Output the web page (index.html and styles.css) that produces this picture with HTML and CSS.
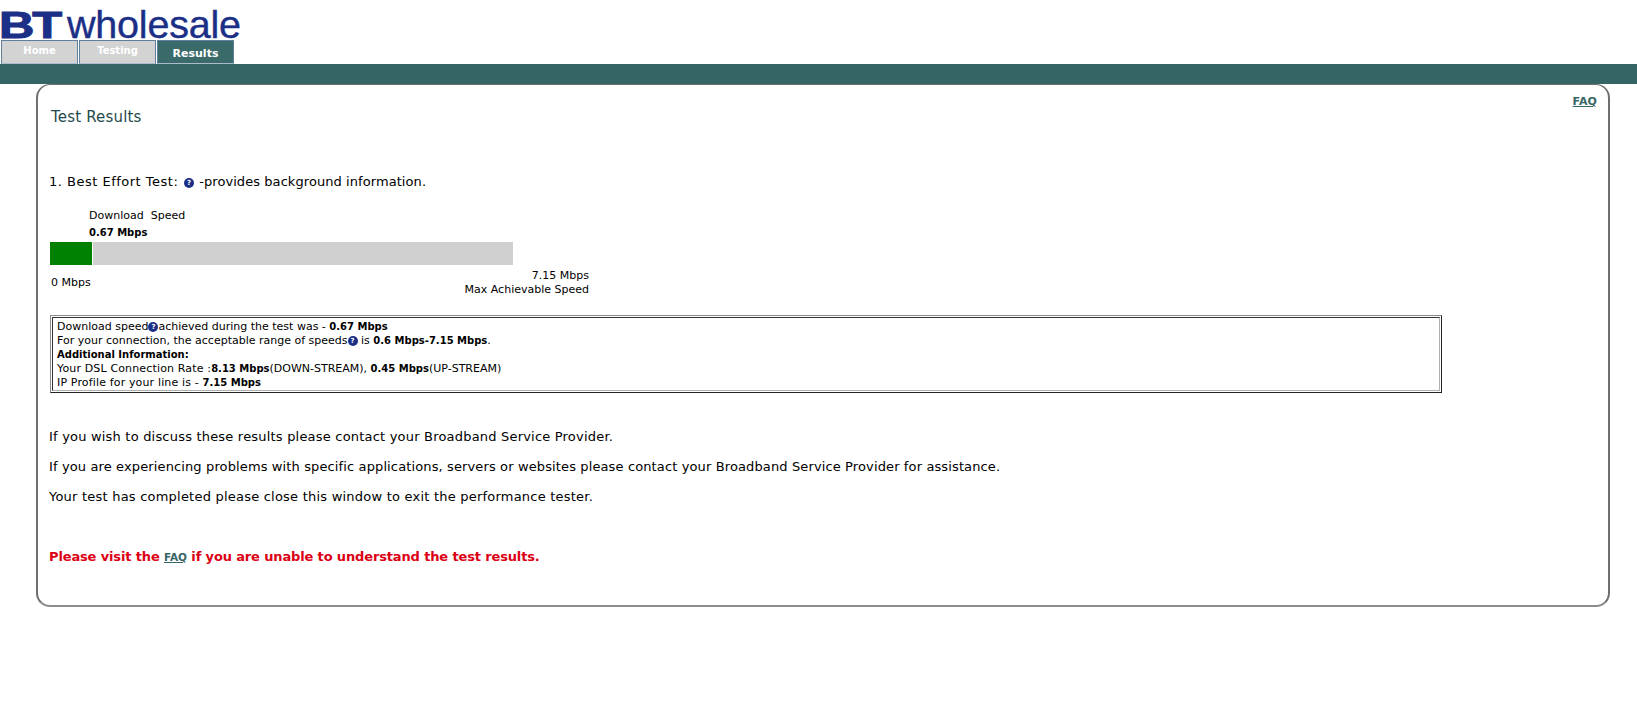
FILE: index.html
```html
<!DOCTYPE html>
<html lang="en">
<head>
<meta charset="utf-8">
<title>BT Wholesale - Test Results</title>
<link rel="stylesheet" href="styles.css">
</head>
<body>
<header class="header">
  <div class="logo"><span class="logo-bt">BT</span><span class="logo-word">wholesale</span></div>
  <nav class="tabs">
    <a class="tab">Home</a>
    <a class="tab">Testing</a>
    <a class="tab tab-active">Results</a>
  </nav>
</header>
<div class="band"></div>
<main class="panel">
  <div class="faq-row"><a class="faq-link">FAQ</a></div>
  <h1 class="title">Test Results</h1>
  <p class="test-line"><span class="test-name">1. Best Effort Test: </span><span class="help help-gap">?</span> -provides background information.</p>
  <div class="speed-label">Download&nbsp; Speed</div>
  <div class="speed-value">0.67 Mbps</div>
  <div class="bar"><div class="bar-fill"></div></div>
  <div class="scale">
    <span class="scale-min">0 Mbps</span>
    <span class="scale-max">7.15 Mbps<br>Max Achievable Speed</span>
  </div>
  <div class="info">
    <div class="info-inner">
      Download speed<span class="help">?</span>achieved during the test was - <b>0.67 Mbps</b><br>
      For your connection, the acceptable range of speeds<span class="help">?</span> is <b>0.6 Mbps-7.15 Mbps</b>.<br>
      <b>Additional Information:</b><br>
      <span class="wide">Your DSL Connection Rate :</span><b>8.13 Mbps</b>(DOWN-STREAM), <b>0.45 Mbps</b>(UP-STREAM)<br>
      <span class="wide">IP Profile for your line is - </span><b>7.15 Mbps</b>
    </div>
  </div>
  <p class="para para-first">If you wish to discuss these results please contact your Broadband Service Provider.</p>
  <p class="para para-long">If you are experiencing problems with specific applications, servers or websites please contact your Broadband Service Provider for assistance.</p>
  <p class="para para-last">Your test has completed please close this window to exit the performance tester.</p>
  <p class="notice">Please visit the <a class="notice-link">FAQ</a> if you are unable to understand the test results.</p>
</main>
</body>
</html>
```
FILE: styles.css
```css
* { box-sizing: border-box; }
html, body { margin: 0; padding: 0; background: #fff; }
body { font-family: "DejaVu Sans", Verdana, sans-serif; color: #000; height: 708px; overflow: hidden; }

.header { height: 64px; display: flex; flex-direction: column; }
.logo { height: 40px; padding-top: 8px; display: flex; align-items: baseline; color: #1c2f86; white-space: nowrap; }
.logo-bt { font-family: "Liberation Sans", Arial, sans-serif; font-weight: 700; font-size: 36px; line-height: 32px; width: 68px; margin-left: -1px; letter-spacing: -1.5px; transform: scaleX(1.36); transform-origin: left center; -webkit-text-stroke: 1px #1c2f86; }
.logo-word { font-family: "Liberation Sans", Arial, sans-serif; font-size: 39.5px; line-height: 32px; letter-spacing: -0.2px; -webkit-text-stroke: 0.4px #1c2f86; }

.tabs { display: flex; height: 24px; padding-left: 1px; gap: 1px; }
.tab { width: 77px; height: 24px; border: 1px solid #5f7f9c; border-bottom-color: #a9bccd; background: #d3d3d3; color: #fff; font-weight: 700; font-size: 10px; line-height: 20px; text-align: center; }
.tab-active { background: #3a6a6a; font-size: 11px; line-height: 25px; }

.band { height: 20px; background: #366566; }

.panel { height: 523px; margin: 0 27px 0 36px; border: 2px solid #6f6f6f; border-top-width: 1px; border-bottom-color: #8c8c8c; border-radius: 14px; }
.faq-row { height: 23px; padding: 5px 11px 0 0; text-align: right; }
.faq-link { font-size: 11px; font-weight: 700; line-height: 14px; letter-spacing: 0.1px; color: #366566; text-decoration: underline; display: inline-block; }
.title { margin: 0; padding-left: 13px; font-size: 15px; font-weight: 400; line-height: 18px; letter-spacing: 0.17px; color: #1f4a4b; }
.test-line { margin: 48px 0 0 11px; font-size: 13px; line-height: 16px; letter-spacing: 0.07px; }
.test-name { letter-spacing: 0.5px; }
.help { display: inline-block; width: 10px; height: 10px; border-radius: 50%; background: #1c2f86; color: #fff; font-size: 7px; font-weight: 700; line-height: 10px; letter-spacing: 0; text-align: center; vertical-align: 1px; }
.help-gap { margin: 0 1px; }
.speed-label { margin: 19px 0 0 51px; font-size: 11px; line-height: 14px; }
.speed-value { margin: 3px 0 0 51px; font-size: 10px; font-weight: 700; line-height: 14px; }
.bar { margin: 2px 0 0 12px; width: 463px; height: 23px; background: #d0d0d0; }
.bar-fill { width: 43px; height: 23px; background: #008000; border-right: 1px solid #fff; }
.scale { display: flex; justify-content: space-between; align-items: center; width: 538px; margin: 4px 0 0 13px; font-size: 11px; line-height: 14px; }
.scale-max { text-align: right; }
.info { margin: 18px 0 0 12px; width: 1392px; height: 78px; border: 1px solid; border-color: #8a8a8a #222 #222 #8a8a8a; padding: 1px; }
.info-inner { height: 100%; border: 1px solid; border-color: #333 #b0b0b0 #b0b0b0 #333; padding: 2px 4px 0; font-size: 11px; line-height: 14px; }
.info-inner b { font-size: 10px; }
.wide { letter-spacing: 0.15px; }
.para { margin: 15px 0 0 11px; font-size: 13px; line-height: 15px; letter-spacing: 0.2px; }
.para-first { margin-top: 36px; }
.para-long { letter-spacing: 0.125px; }
.para-last { letter-spacing: 0.22px; }
.notice { margin: 45px 0 0 11px; font-size: 13px; line-height: 15px; font-weight: 700; letter-spacing: -0.14px; color: #dc0014; }
.notice-link { font-size: 10.5px; letter-spacing: 0; color: #366566; text-decoration: underline; }
```
